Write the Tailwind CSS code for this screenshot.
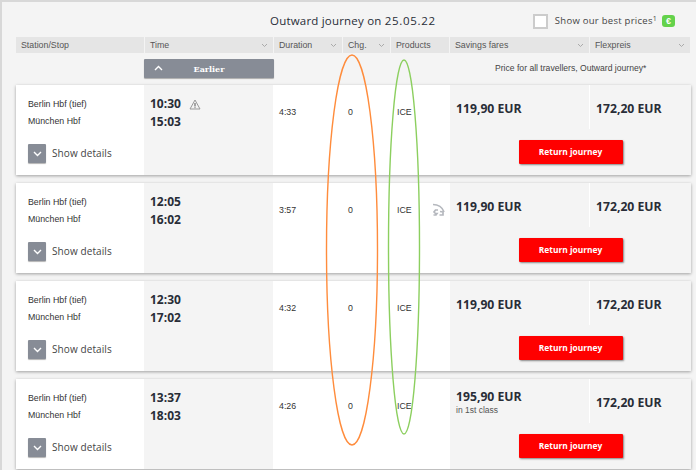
<!DOCTYPE html>
<html lang="en">
<head>
    <meta charset="UTF-8">
    <meta name="viewport" content="width=device-width, initial-scale=1.0">
    <title>Outward journey</title>
    <script src="https://cdn.jsdelivr.net/npm/@tailwindcss/browser@4"></script>
</head>
<body class="bg-[#f4f4f4]">
    <div class="relative h-[470px] w-[696px] overflow-hidden border-l-2 border-t-2 border-[#d8d8d8] font-['Liberation_Sans',sans-serif] text-[#333]">

        <!-- title line -->
        <div class="flex h-[35px] items-start">
            <h1 class="ml-[268px] mt-[11px] font-['Open_Sans',sans-serif] text-[11.5px] leading-[16px] tracking-[0.2px] text-[#282d37]">Outward journey on <span class="tracking-[0.7px]">25.05.22</span></h1>
            <span class="ml-[97px] mt-[12px] h-[15px] w-[15px] shrink-0 border-2 border-[#ccc] bg-white"></span>
            <span class="ml-[7px] mt-[11px] font-['Open_Sans',sans-serif] text-[9.5px] leading-[16px] tracking-[0.27px] text-[#444]">Show our best prices<sup class="text-[7px]">1</sup></span>
            <span class="ml-[5px] mt-[13px] flex h-[12px] w-[13px] items-center justify-center rounded-[3px] bg-[#64d24b] text-[9px] font-bold leading-none text-white">€</span>
        </div>

        <!-- column headers -->
        <div class="ml-[14px] flex h-[16px] gap-[1px] text-[8.8px] leading-[16px] text-[#555]">
            <div class="w-[128px] bg-[#e5e5e5] px-[5px]">Station/Stop</div>
            <div class="flex w-[128px] items-center justify-between bg-[#e5e5e5] px-[5px]">Time
                <svg class="h-[5px] w-[7px]" viewBox="0 0 7 5" fill="none" stroke="#aaa"><path d="M1 1l2.5 2.5L6 1"/></svg>
            </div>
            <div class="flex w-[68px] items-center justify-between bg-[#e5e5e5] px-[5px]">Duration
                <svg class="h-[5px] w-[7px]" viewBox="0 0 7 5" fill="none" stroke="#aaa"><path d="M1 1l2.5 2.5L6 1"/></svg>
            </div>
            <div class="flex w-[47px] items-center justify-between bg-[#e5e5e5] px-[5px]">Chg.
                <svg class="h-[5px] w-[7px]" viewBox="0 0 7 5" fill="none" stroke="#aaa"><path d="M1 1l2.5 2.5L6 1"/></svg>
            </div>
            <div class="w-[58px] bg-[#e5e5e5] px-[5px]">Products</div>
            <div class="flex w-[139px] items-center justify-between bg-[#e5e5e5] px-[5px]">Savings fares
                <svg class="h-[5px] w-[7px]" viewBox="0 0 7 5" fill="none" stroke="#aaa"><path d="M1 1l2.5 2.5L6 1"/></svg>
            </div>
            <div class="flex w-[100px] items-center justify-between bg-[#e5e5e5] px-[5px]">Flexpreis
                <svg class="h-[5px] w-[7px]" viewBox="0 0 7 5" fill="none" stroke="#aaa"><path d="M1 1l2.5 2.5L6 1"/></svg>
            </div>
        </div>

        <!-- earlier + price hint -->
        <div class="ml-[142px] mt-[6px] flex h-[19px] w-[549px] items-center">
            <button class="relative flex h-[19px] w-[130px] items-center justify-center rounded-[1px] bg-[#878c96] font-['DejaVu_Serif',serif] text-[8px] font-bold text-white shadow-[0_1px_1px_rgba(0,0,0,.3)]">
                <svg class="absolute left-[10px] top-[6px] h-[6px] w-[9px]" viewBox="0 0 9 6" fill="none" stroke="#fff" stroke-width="1.4"><path d="M1 5l3.5-3.5L8 5"/></svg>
                Earlier
            </button>
            <span class="ml-[221px] text-[8.6px] text-[#444]">Price for all travellers, Outward journey*</span>
        </div>

        <!-- connections -->
        <div class="ml-[14px] mt-[7px] flex w-[675px] flex-col gap-[8px]">

            <div class="flex h-[90px] bg-white shadow-[0_1px_3px_rgba(0,0,0,.35)]">
                <div class="flex w-[128px] flex-col pl-[12px] pt-[11px] text-[8.8px] leading-[17px]">
                    <span>Berlin Hbf (tief)</span>
                    <span>München Hbf</span>
                    <div class="mt-[14px] flex items-center gap-[6px]">
                        <span class="flex h-[19px] w-[18px] items-center justify-center rounded-[1px] bg-[#878c96] shadow-[0_1px_1px_rgba(0,0,0,.3)]">
                            <svg class="h-[6px] w-[9px]" viewBox="0 0 9 6" fill="none" stroke="#fff" stroke-width="1.4"><path d="M1 1l3.5 3.5L8 1"/></svg>
                        </span>
                        <span class="font-['Open_Sans',sans-serif] text-[10px] tracking-[0.1px] text-[#444]">Show details</span>
                    </div>
                </div>
                <div class="w-[129px] bg-[#f4f4f4] px-[6px] pt-[10px] font-['Open_Sans',sans-serif] text-[12px] font-bold leading-[18px] text-[#282d37]">
                    <div class="flex items-center gap-[8px]">10:30
                        <svg class="h-[11px] w-[12px]" viewBox="0 0 12 11" fill="none" stroke="#999"><path d="M6 1l5 9H1z"/><path d="M6 4v3.5M6 8.3v.8" stroke="#555"/></svg>
                    </div>
                    <div>15:03</div>
                </div>
                <div class="w-[69px] pl-[6px] pt-[20px] text-[8.8px] leading-[14px]">4:33</div>
                <div class="w-[49px] pl-[6px] pt-[20px] text-[8.8px] leading-[14px]">0</div>
                <div class="w-[59px] pl-[6px] pt-[20px] text-[8.8px] leading-[14px]">ICE</div>
                <div class="relative flex w-[241px] flex-col bg-[#f4f4f4]">
                    <div class="flex h-[44px] font-['Open_Sans',sans-serif] text-[12.2px] font-bold leading-[17px] text-[#282d37]">
                        <div class="w-[140px] border-r border-white pl-[6px] pt-[15px]">119,90 EUR</div>
                        <div class="pl-[6px] pt-[15px]">172,20 EUR</div>
                    </div>
                    <button class="mx-auto mt-[11px] h-[24px] w-[104px] rounded-[1px] bg-[#f00] font-['Open_Sans',sans-serif] text-[8.4px] font-bold text-white shadow-[1px_1px_2px_rgba(0,0,0,.45)]">Return journey</button>
                </div>
            </div>

            <div class="flex h-[90px] bg-white shadow-[0_1px_3px_rgba(0,0,0,.35)]">
                <div class="flex w-[128px] flex-col pl-[12px] pt-[11px] text-[8.8px] leading-[17px]">
                    <span>Berlin Hbf (tief)</span>
                    <span>München Hbf</span>
                    <div class="mt-[14px] flex items-center gap-[6px]">
                        <span class="flex h-[19px] w-[18px] items-center justify-center rounded-[1px] bg-[#878c96] shadow-[0_1px_1px_rgba(0,0,0,.3)]">
                            <svg class="h-[6px] w-[9px]" viewBox="0 0 9 6" fill="none" stroke="#fff" stroke-width="1.4"><path d="M1 1l3.5 3.5L8 1"/></svg>
                        </span>
                        <span class="font-['Open_Sans',sans-serif] text-[10px] tracking-[0.1px] text-[#444]">Show details</span>
                    </div>
                </div>
                <div class="w-[129px] bg-[#f4f4f4] px-[6px] pt-[10px] font-['Open_Sans',sans-serif] text-[12px] font-bold leading-[18px] text-[#282d37]">
                    <div>12:05</div>
                    <div>16:02</div>
                </div>
                <div class="w-[69px] pl-[6px] pt-[20px] text-[8.8px] leading-[14px]">3:57</div>
                <div class="w-[49px] pl-[6px] pt-[20px] text-[8.8px] leading-[14px]">0</div>
                <div class="flex w-[59px] items-start justify-between pl-[6px] pr-[5px] pt-[20px] text-[8.8px] leading-[14px]">ICE
                    <svg class="h-[13px] w-[13px]" viewBox="0 0 13 13" fill="none" stroke="#b5b8be" stroke-width="1.7"><path d="M1 1.5c5 0 9.500 3 11 7.500"/><path d="M6 7H3.500L2 9l1.500 1.500H5L4 12H1.500"/><path d="M8 8.500l3 .5v3H7.500"/></svg>
                </div>
                <div class="relative flex w-[241px] flex-col bg-[#f4f4f4]">
                    <div class="flex h-[44px] font-['Open_Sans',sans-serif] text-[12.2px] font-bold leading-[17px] text-[#282d37]">
                        <div class="w-[140px] border-r border-white pl-[6px] pt-[15px]">119,90 EUR</div>
                        <div class="pl-[6px] pt-[15px]">172,20 EUR</div>
                    </div>
                    <button class="mx-auto mt-[11px] h-[24px] w-[104px] rounded-[1px] bg-[#f00] font-['Open_Sans',sans-serif] text-[8.4px] font-bold text-white shadow-[1px_1px_2px_rgba(0,0,0,.45)]">Return journey</button>
                </div>
            </div>

            <div class="flex h-[90px] bg-white shadow-[0_1px_3px_rgba(0,0,0,.35)]">
                <div class="flex w-[128px] flex-col pl-[12px] pt-[11px] text-[8.8px] leading-[17px]">
                    <span>Berlin Hbf (tief)</span>
                    <span>München Hbf</span>
                    <div class="mt-[14px] flex items-center gap-[6px]">
                        <span class="flex h-[19px] w-[18px] items-center justify-center rounded-[1px] bg-[#878c96] shadow-[0_1px_1px_rgba(0,0,0,.3)]">
                            <svg class="h-[6px] w-[9px]" viewBox="0 0 9 6" fill="none" stroke="#fff" stroke-width="1.4"><path d="M1 1l3.5 3.5L8 1"/></svg>
                        </span>
                        <span class="font-['Open_Sans',sans-serif] text-[10px] tracking-[0.1px] text-[#444]">Show details</span>
                    </div>
                </div>
                <div class="w-[129px] bg-[#f4f4f4] px-[6px] pt-[10px] font-['Open_Sans',sans-serif] text-[12px] font-bold leading-[18px] text-[#282d37]">
                    <div>12:30</div>
                    <div>17:02</div>
                </div>
                <div class="w-[69px] pl-[6px] pt-[20px] text-[8.8px] leading-[14px]">4:32</div>
                <div class="w-[49px] pl-[6px] pt-[20px] text-[8.8px] leading-[14px]">0</div>
                <div class="w-[59px] pl-[6px] pt-[20px] text-[8.8px] leading-[14px]">ICE</div>
                <div class="relative flex w-[241px] flex-col bg-[#f4f4f4]">
                    <div class="flex h-[44px] font-['Open_Sans',sans-serif] text-[12.2px] font-bold leading-[17px] text-[#282d37]">
                        <div class="w-[140px] border-r border-white pl-[6px] pt-[15px]">119,90 EUR</div>
                        <div class="pl-[6px] pt-[15px]">172,20 EUR</div>
                    </div>
                    <button class="mx-auto mt-[11px] h-[24px] w-[104px] rounded-[1px] bg-[#f00] font-['Open_Sans',sans-serif] text-[8.4px] font-bold text-white shadow-[1px_1px_2px_rgba(0,0,0,.45)]">Return journey</button>
                </div>
            </div>

            <div class="flex h-[90px] bg-white shadow-[0_1px_3px_rgba(0,0,0,.35)]">
                <div class="flex w-[128px] flex-col pl-[12px] pt-[11px] text-[8.8px] leading-[17px]">
                    <span>Berlin Hbf (tief)</span>
                    <span>München Hbf</span>
                    <div class="mt-[14px] flex items-center gap-[6px]">
                        <span class="flex h-[19px] w-[18px] items-center justify-center rounded-[1px] bg-[#878c96] shadow-[0_1px_1px_rgba(0,0,0,.3)]">
                            <svg class="h-[6px] w-[9px]" viewBox="0 0 9 6" fill="none" stroke="#fff" stroke-width="1.4"><path d="M1 1l3.5 3.5L8 1"/></svg>
                        </span>
                        <span class="font-['Open_Sans',sans-serif] text-[10px] tracking-[0.1px] text-[#444]">Show details</span>
                    </div>
                </div>
                <div class="w-[129px] bg-[#f4f4f4] px-[6px] pt-[10px] font-['Open_Sans',sans-serif] text-[12px] font-bold leading-[18px] text-[#282d37]">
                    <div>13:37</div>
                    <div>18:03</div>
                </div>
                <div class="w-[69px] pl-[6px] pt-[20px] text-[8.8px] leading-[14px]">4:26</div>
                <div class="w-[49px] pl-[6px] pt-[20px] text-[8.8px] leading-[14px]">0</div>
                <div class="w-[59px] pl-[6px] pt-[20px] text-[8.8px] leading-[14px]">ICE</div>
                <div class="relative flex w-[241px] flex-col bg-[#f4f4f4]">
                    <div class="flex h-[44px] font-['Open_Sans',sans-serif] text-[12.2px] font-bold leading-[17px] text-[#282d37]">
                        <div class="w-[140px] border-r border-white pl-[6px] pt-[9px]">195,90 EUR
                            <div class="font-['Liberation_Sans',sans-serif] text-[8.5px] font-normal leading-[10px] text-[#555]">in 1st class</div>
                        </div>
                        <div class="pl-[6px] pt-[15px]">172,20 EUR</div>
                    </div>
                    <button class="mx-auto mt-[11px] h-[24px] w-[104px] rounded-[1px] bg-[#f00] font-['Open_Sans',sans-serif] text-[8.4px] font-bold text-white shadow-[1px_1px_2px_rgba(0,0,0,.45)]">Return journey</button>
                </div>
            </div>
        </div>

        <!-- hand drawn highlight ellipses -->
        <svg class="absolute left-[-2px] top-[-2px] h-[470px] w-[696px]" viewBox="0 0 696 470" fill="none">
            <ellipse cx="352" cy="250" rx="25.5" ry="195" stroke="#ff8c3c" stroke-width="1.4"/>
            <ellipse cx="404" cy="247" rx="15.5" ry="187" stroke="#8ccf5f" stroke-width="1.4"/>
        </svg>
    </div>
</body>
</html>
